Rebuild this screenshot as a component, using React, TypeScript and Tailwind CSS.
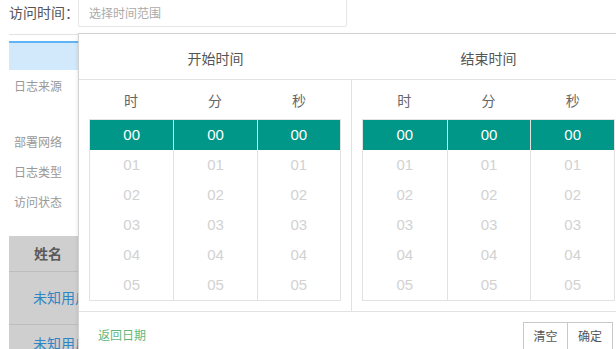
import React from "react";

const rows = ["00", "01", "02", "03", "04", "05"];
const units = ["时", "分", "秒"];

function TimePane({ divider }: { divider?: boolean }) {
  return (
    <div className={`flex w-[273px] shrink-0 flex-col ${divider ? "border-r border-[#e2e2e2]" : ""}`}>
      <div className="grid grid-cols-3 px-[10px] pt-[12px] pb-[8px] text-[14px] text-[#666]">
        {units.map((u) => (
          <div key={u} className="text-center leading-[19px]">{u}</div>
        ))}
      </div>
      <div className="mx-[10px] grid grid-cols-3 border border-[#e2e2e2]">
        {units.map((u, ci) => (
          <ul key={u} className={ci > 0 ? "border-l border-[#e2e2e2]" : ""}>
            {rows.map((r, ri) => (
              <li
                key={r}
                className={`h-[30px] text-center text-[15px] leading-[30px] ${
                  ri === 0 ? "bg-[#009688] text-white" : "text-[#d2d2d2]"
                }`}
              >
                {r}
              </li>
            ))}
          </ul>
        ))}
      </div>
      <div className="h-[10px]" />
    </div>
  );
}

export default function App() {
  return (
    <div
      className="relative h-[349px] w-[616px] overflow-hidden bg-white"
      style={{ fontFamily: '"Liberation Sans", "Noto Sans CJK SC", sans-serif' }}
    >
      {/* form row */}
      <div className="mt-[-5px] flex items-start pl-[9px]">
        <label className="w-[69px] shrink-0 whitespace-nowrap pt-[8px] text-[14px] leading-[20px] text-[#555]">
          访问时间：
        </label>
        <div className="flex h-[32px] w-[269px] shrink-0 items-center rounded-[2px] border border-[#e6e6e6] pl-[10px] pt-[6px] text-[12px] text-[#aaa]">
          选择时间范围
        </div>
      </div>

      {/* page content under popup */}
      <div className="ml-[9px] mt-[7px] w-[200px]">
        <div className="border-t border-[#e2e2e2]" />
        <div className="mt-[6px] h-[29px] border-t-2 border-[#5fb4f5] bg-[#d2e9fc]" />
        <div className="pl-[5px] pt-[9px] text-[12px] leading-[16px] text-[#999]">日志来源</div>
        <div className="flex flex-col gap-[14px] pl-[5px] pt-[40px] text-[12px] leading-[16px] text-[#999]">
          <div>部署网络</div>
          <div>日志类型</div>
          <div>访问状态</div>
        </div>
        <div className="mt-[25px] bg-[#cfcfcf]">
          <div className="h-[36px] border-b border-[#bdbdbd] pl-[25px] text-[14px] font-bold leading-[36px] text-[#5a5a5a]">
            姓名
          </div>
          <div className="h-[53px] border-b border-[#bdbdbd] pl-[24px] text-[14px] leading-[53px] text-[#2f86c4]">
            未知用户
          </div>
          <div className="h-[53px] whitespace-nowrap pl-[24px] pt-[4px] text-[14px] leading-[30px] text-[#2f86c4]">
            未知用户
          </div>
        </div>
      </div>

      {/* laydate popup */}
      <div className="absolute left-[78px] top-[33px] w-[548px] border border-[#d2d2d2] bg-white shadow-[0_2px_4px_rgba(0,0,0,0.12)]">
        <div className="flex border-b border-[#e2e2e2]">
          <div className="flex h-[45px] w-[273px] items-center justify-center pt-[5px] text-[14px] text-[#555]">开始时间</div>
          <div className="flex h-[45px] w-[273px] items-center justify-center pt-[5px] text-[14px] text-[#555]">结束时间</div>
        </div>
        <div className="flex">
          <TimePane divider />
          <TimePane />
        </div>
        <div className="flex h-[50px] items-start justify-between border-t border-[#e2e2e2] pl-[19px] pr-[12px] pt-[10px]">
          <span className="pt-[6px] text-[12px] leading-[16px] text-[#5fb878]">返回日期</span>
          <div className="flex">
            <button className="h-[30px] w-[45px] border border-[#c9c9c9] bg-white text-[12px] text-[#555]">清空</button>
            <button className="ml-[-1px] h-[30px] w-[46px] border border-[#c9c9c9] bg-white text-[12px] text-[#555]">确定</button>
          </div>
        </div>
      </div>
    </div>
  );
}
